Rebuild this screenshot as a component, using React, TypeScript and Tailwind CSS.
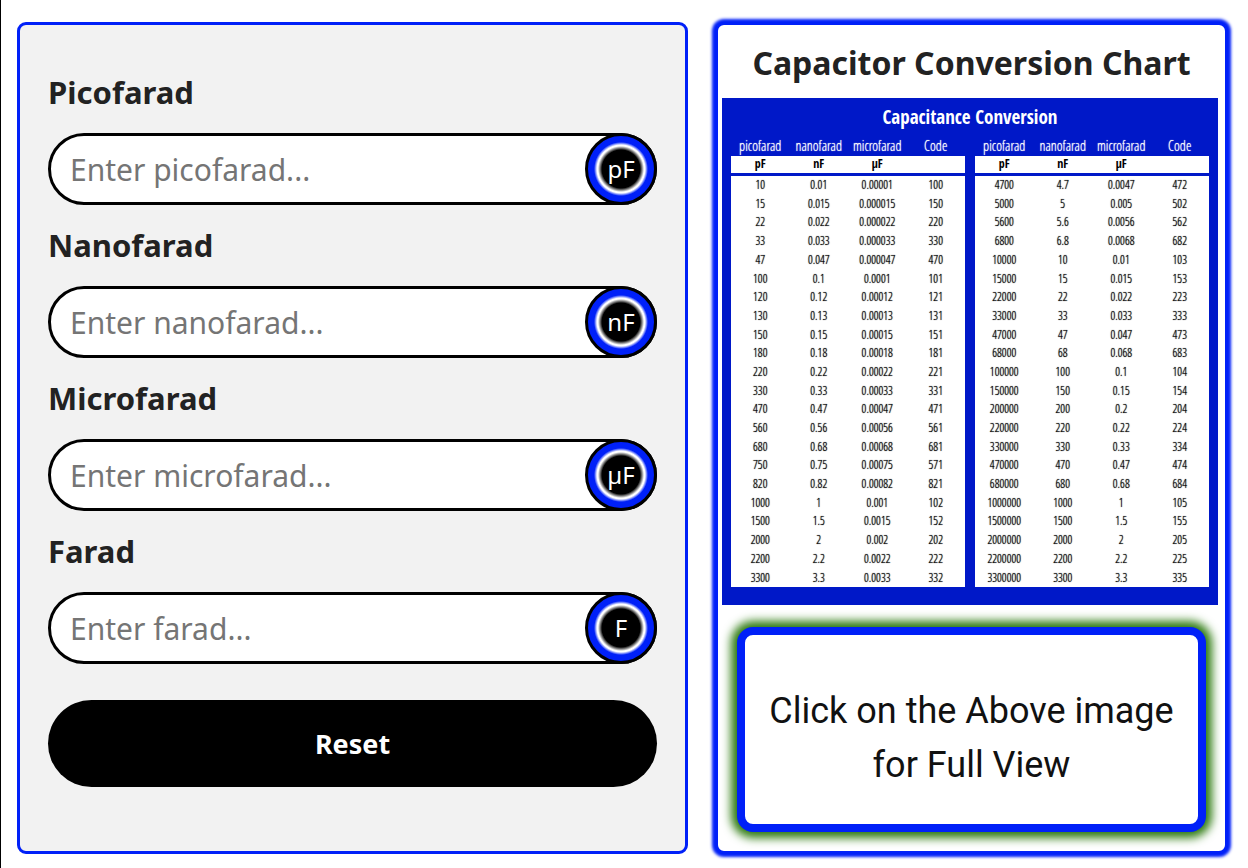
import { useState } from "react";

const FIELDS = [
  { id: "picofarad", label: "Picofarad", unit: "pF", factor: 1e-12 },
  { id: "nanofarad", label: "Nanofarad", unit: "nF", factor: 1e-9 },
  { id: "microfarad", label: "Microfarad", unit: "µF", factor: 1e-6 },
  { id: "farad", label: "Farad", unit: "F", factor: 1 },
];

const LEFT_ROWS = [
  ["10", "0.01", "0.00001", "100"],
  ["15", "0.015", "0.000015", "150"],
  ["22", "0.022", "0.000022", "220"],
  ["33", "0.033", "0.000033", "330"],
  ["47", "0.047", "0.000047", "470"],
  ["100", "0.1", "0.0001", "101"],
  ["120", "0.12", "0.00012", "121"],
  ["130", "0.13", "0.00013", "131"],
  ["150", "0.15", "0.00015", "151"],
  ["180", "0.18", "0.00018", "181"],
  ["220", "0.22", "0.00022", "221"],
  ["330", "0.33", "0.00033", "331"],
  ["470", "0.47", "0.00047", "471"],
  ["560", "0.56", "0.00056", "561"],
  ["680", "0.68", "0.00068", "681"],
  ["750", "0.75", "0.00075", "571"],
  ["820", "0.82", "0.00082", "821"],
  ["1000", "1", "0.001", "102"],
  ["1500", "1.5", "0.0015", "152"],
  ["2000", "2", "0.002", "202"],
  ["2200", "2.2", "0.0022", "222"],
  ["3300", "3.3", "0.0033", "332"],
];

const RIGHT_ROWS = [
  ["4700", "4.7", "0.0047", "472"],
  ["5000", "5", "0.005", "502"],
  ["5600", "5.6", "0.0056", "562"],
  ["6800", "6.8", "0.0068", "682"],
  ["10000", "10", "0.01", "103"],
  ["15000", "15", "0.015", "153"],
  ["22000", "22", "0.022", "223"],
  ["33000", "33", "0.033", "333"],
  ["47000", "47", "0.047", "473"],
  ["68000", "68", "0.068", "683"],
  ["100000", "100", "0.1", "104"],
  ["150000", "150", "0.15", "154"],
  ["200000", "200", "0.2", "204"],
  ["220000", "220", "0.22", "224"],
  ["330000", "330", "0.33", "334"],
  ["470000", "470", "0.47", "474"],
  ["680000", "680", "0.68", "684"],
  ["1000000", "1000", "1", "105"],
  ["1500000", "1500", "1.5", "155"],
  ["2000000", "2000", "2", "205"],
  ["2200000", "2200", "2.2", "225"],
  ["3300000", "3300", "3.3", "335"],
];

function ConversionTable({ rows }: { rows: string[][] }) {
  return (
    <table className="h-[451px] w-full table-fixed border-collapse text-center font-['Open_Sans_Condensed_Light','Noto_Sans_Condensed','Noto_Sans',sans-serif] text-[12px] leading-[16px]">
      <thead>
        <tr className="h-[20px] text-white [text-shadow:0_0_1px_#fff]">
          {["picofarad", "nanofarad", "microfarad", "Code"].map((name) => (
            <th key={name} scope="col" className="p-0 text-[14px] font-normal">
              {name}
            </th>
          ))}
        </tr>
        <tr className="h-[18px] border-b-3 border-[#0018c8] bg-white text-black">
          {["pF", "nF", "µF", ""].map((unit) => (
            <td
              key={unit}
              className="p-0 font-['Open_Sans_Condensed','Noto_Sans',sans-serif] font-bold"
            >
              {unit}
            </td>
          ))}
        </tr>
      </thead>
      <tbody className="bg-white text-black [text-shadow:0_0_1px_#000]">
        {rows.map((row) => (
          <tr key={row[0]}>
            {row.map((cell, i) => (
              <td key={i} className="p-0">
                {cell}
              </td>
            ))}
          </tr>
        ))}
      </tbody>
    </table>
  );
}

export default function App() {
  const [farads, setFarads] = useState<number | null>(null);
  const [active, setActive] = useState("");
  const [text, setText] = useState("");

  const valueOf = (id: string, factor: number) => {
    if (id === active) return text;
    return farads === null ? "" : String(Number((farads / factor).toPrecision(10)));
  };

  const change = (id: string, factor: number, value: string) => {
    const parsed = parseFloat(value);
    setActive(id);
    setText(value);
    setFarads(Number.isNaN(parsed) ? null : parsed * factor);
  };

  const reset = () => {
    setActive("");
    setText("");
    setFarads(null);
  };

  return (
    <main className="grid min-h-screen grid-cols-[671fr_513fr] items-start gap-[27px] border-l border-black bg-white pt-[22px] pr-[20px] pb-[14px] pl-[16px] font-['Noto_Sans','Open_Sans',sans-serif]">
      <form
        className="flex flex-col rounded-[9px] border-3 border-[#0020f8] bg-[#f2f2f2] px-[28px] pt-[46px] pb-[64px]"
        onSubmit={(e) => e.preventDefault()}
      >
        <div className="flex flex-col gap-[19px]">
          {FIELDS.map((f) => (
            <div key={f.id} className="flex flex-col gap-[20px]">
              <label htmlFor={f.id} className="text-[31px] leading-[42px] font-bold text-[#222]">
                {f.label}
              </label>
              <div className="flex h-[72px] rounded-full bg-white">
                <input
                  id={f.id}
                  type="text"
                  inputMode="decimal"
                  value={valueOf(f.id, f.factor)}
                  onChange={(e) => change(f.id, f.factor, e.target.value)}
                  placeholder={`Enter ${f.label.toLowerCase()}...`}
                  className="-mr-[72px] min-w-0 flex-1 rounded-full border-3 border-black bg-white pr-[76px] pl-[19px] text-[30px] text-[#222] outline-none placeholder:text-[#757575]"
                />
                <span className="z-10 flex size-[72px] items-center justify-center rounded-full border-3 border-black bg-[radial-gradient(circle,#000_19px,#fff_23px,#fff_24px,#0020f8_27px)] text-[24px] text-white">
                  {f.unit}
                </span>
              </div>
            </div>
          ))}
        </div>
        <button
          type="button"
          onClick={reset}
          className="mt-[36px] h-[87px] rounded-full bg-black pt-[2px] text-[27px] font-bold text-white"
        >
          Reset
        </button>
      </form>

      <section className="flex flex-col rounded-[9px] border-3 border-[#0020f8] bg-white px-[4px] pt-[15px] pb-[19px] shadow-[0_0_3px_3px_#0020f8]">
        <h2 className="text-center text-[32px] leading-[46px] font-bold text-[#222]">
          Capacitor Conversion Chart
        </h2>
        <a href="#chart" className="mt-[12px] mr-[3px] block bg-[#0018c8] px-[9px] pb-[18px]">
          <h3 className="text-center font-['Open_Sans_Condensed','Noto_Sans',sans-serif] text-[19px] leading-[38px] font-bold text-white">
            Capacitance Conversion
          </h3>
          <div className="grid grid-cols-2 gap-[10px]">
            <ConversionTable rows={LEFT_ROWS} />
            <ConversionTable rows={RIGHT_ROWS} />
          </div>
        </a>
        <p className="mx-[15px] mt-[22px] rounded-[16px] border-8 border-[#0020f8] bg-white px-[16px] pt-[49px] pb-[32px] text-center font-['Roboto',sans-serif] text-[36px] leading-[54px] text-[#111] shadow-[0_0_10px_6px_#2d7a10]">
          Click on the Above image for Full View
        </p>
      </section>
    </main>
  );
}
